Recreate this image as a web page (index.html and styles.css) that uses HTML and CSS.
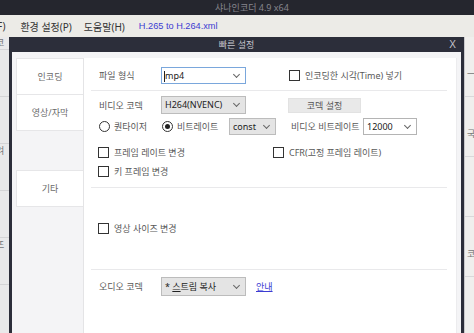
FILE: index.html
```html
<!DOCTYPE html>
<html lang="ko">
<head>
    <meta charset="UTF-8">
    <title>빠른 설정</title>
    <link rel="stylesheet" href="styles.css">
</head>
<body>
    <div class="app-title">샤나인코더 4.9 x64</div>
    <div class="menubar">
        <span class="menu cut">F)</span>
        <span class="menu">환경 설정(P)</span>
        <span class="menu">도움말(H)</span>
        <span class="menu preset">H.265 to H.264.xml</span>
    </div>

    <div class="desk">
        <!-- list behind the dialog, left side -->
        <div class="strip strip-left">
            <div class="strip-row">코</div>
            <div class="strip-row"></div>
            <div class="strip-row"></div>
            <div class="strip-row">려</div>
            <div class="strip-row"></div>
            <div class="strip-row">뜨</div>
        </div>

        <div class="dialog">
            <div class="dialog-title">
                <span></span>
                <span class="title-text">빠른 설정</span>
                <span class="close">X</span>
            </div>
            <div class="dialog-body">
                <div class="tabs">
                    <div class="tab">인코딩</div>
                    <div class="tab">영상/자막</div>
                    <div class="tab-gap"></div>
                    <div class="tab">기타</div>
                </div>

                <div class="panel">
                    <div class="section section-file">
                        <div class="row">
                            <span class="label">파일 형식</span>
                            <div class="combo combo-main focused"><span class="caret"></span>mp4<span class="arrow"></span></div>
                            <label class="check time-check"><span class="box"></span>인코딩한 시각(Time) 넣기</label>
                        </div>
                    </div>

                    <div class="section section-video">
                        <div class="row row-codec">
                            <span class="label">비디오 코덱</span>
                            <div class="combo combo-main grey">H264(NVENC)<span class="arrow"></span></div>
                            <button class="btn">코덱 설정</button>
                        </div>
                        <div class="row row-rate">
                            <label class="radio radio-q"><span class="dot"></span>퀀타이저</label>
                            <label class="radio radio-b"><span class="dot on"></span>비트레이트</label>
                            <div class="combo combo-mode grey">const<span class="arrow"></span></div>
                            <span class="label label-rate">비디오 비트레이트</span>
                            <div class="combo combo-rate">12000<span class="arrow"></span></div>
                        </div>
                        <div class="row row-fps">
                            <label class="check check-fps"><span class="box"></span>프레임 레이트 변경</label>
                            <label class="check"><span class="box"></span>CFR(고정 프레임 레이트)</label>
                        </div>
                        <div class="row row-key">
                            <label class="check"><span class="box"></span>키 프레임 변경</label>
                        </div>
                    </div>

                    <div class="section section-size">
                        <div class="row">
                            <label class="check"><span class="box"></span>영상 사이즈 변경</label>
                        </div>
                    </div>

                    <div class="section section-audio">
                        <div class="row">
                            <span class="label">오디오 코덱</span>
                            <div class="combo combo-audio grey">* <u>스</u>트림 복사<span class="arrow"></span></div>
                            <a class="help" href="#">안내</a>
                        </div>
                    </div>
                </div>
                <div class="panel-edge"></div>
            </div>
        </div>

        <!-- list behind the dialog, right side -->
        <div class="strip strip-right">
            <div class="strip-row">一</div>
            <div class="strip-row">국</div>
            <div class="strip-row"></div>
            <div class="strip-row">코</div>
        </div>
    </div>
</body>
</html>
```

FILE: styles.css
```css
html, body {
    margin: 0;
    padding: 0;
}
body {
    width: 474px;
    height: 333px;
    overflow: hidden;
    font-family: 'Noto Sans', 'Noto Sans CJK KR', sans-serif;
    font-size: 9px;
    color: #585858;
    background: #ecebe7;
}

/* main window title */
.app-title {
    height: 15px;
    line-height: 15px;
    background: #25262e;
    color: #85858d;
    font-size: 9px;
    text-align: center;
    padding-left: 30px;
}

/* menu bar */
.menubar {
    height: 22px;
    display: flex;
    align-items: center;
    background: #ecebe7;
    font-size: 10px;
    color: #333;
}
.menu {
    margin-right: 12px;
}
.menu.cut {
    margin-left: -3px;
    margin-right: 15px;
}
.menu.preset {
    color: #3c3cd2;
    font-family: 'Liberation Sans', sans-serif;
    font-size: 9.2px;
    margin-left: 2px;
}

.desk {
    display: flex;
    height: 296px;
}

/* pieces of the main window showing round the dialog */
.strip {
    background: #e9e9ea;
    color: #777;
    font-size: 9px;
    overflow: hidden;
}
.strip-left {
    width: 9px;
    display: flex;
    flex-direction: column;
}
.strip-left .strip-row {
    height: 46px;
    border-bottom: 1px solid #d4d4d6;
    text-indent: -4px;
}
.strip-left .strip-row:first-child {
    height: 12px;
    line-height: 12px;
}
.strip-right {
    width: 9px;
    background: #f0efed;
    border-left: 1px solid #c9c9cc;
    display: flex;
    flex-direction: column;
}
.strip-right .strip-row {
    height: 60px;
    padding-top: 30px;
    border-bottom: 1px solid #d8d8da;
    text-indent: 2px;
    box-sizing: border-box;
}

/* dialog */
.dialog {
    width: 455px;
    background: #2c2e3a;
    padding: 0 3px;
    box-sizing: border-box;
    display: flex;
    flex-direction: column;
}
.dialog-title {
    height: 15px;
    display: grid;
    grid-template-columns: 1fr auto 1fr;
    align-items: center;
    color: #c4c4cc;
    font-size: 9px;
}
.close {
    justify-self: end;
    margin-right: 5px;
    font-family: 'Liberation Sans', sans-serif;
    font-size: 10px;
}
.dialog-body {
    flex: 1;
    display: flex;
    background: #f4f4f6;
    padding-top: 6px;
}

/* left tabs */
.tabs {
    width: 67px;
    padding-left: 4px;
    display: flex;
    flex-direction: column;
}
.tab {
    height: 37px;
    background: #fff;
    border: 1px solid #e6e6e8;
    border-right: none;
    box-sizing: border-box;
    display: flex;
    align-items: center;
    justify-content: center;
    color: #6a6a6a;
    margin-top: -1px;
}
.tab:first-child {
    margin-top: 0;
}
.tab-gap {
    height: 40px;
}

/* right panel */
.panel {
    width: 373px;
    background: #fff;
    border-left: 1px solid #e4e4e6;
    box-sizing: border-box;
}
.panel-edge {
    flex: 1;
    border-left: 1px solid #ececee;
}
.section {
    margin: 0 9px 0 7px;
    padding-left: 8px;
    border-bottom: 1px solid #e9e9eb;
}
.section-file {
    padding-top: 9px;
    padding-bottom: 6px;
}
.section-video {
    padding-top: 5px;
    padding-bottom: 8px;
}
.section-size {
    padding-top: 32px;
    padding-bottom: 32px;
}
.section-audio {
    border-bottom: none;
    padding-top: 8px;
}

.row {
    display: flex;
    align-items: center;
    height: 17px;
}
.row-codec {
    height: 18px;
    margin-bottom: 4px;
}
.row-rate {
    margin-bottom: 9px;
}
.row-fps {
    height: 16px;
    margin-bottom: 3px;
}
.row-key {
    height: 16px;
}

.label {
    width: 62px;
    flex-shrink: 0;
}
.label-rate {
    width: 72px;
    margin-left: 15px;
}

/* dropdowns */
.combo {
    position: relative;
    height: 17px;
    line-height: 15px;
    border: 1px solid #b4b4b4;
    background: #fff;
    color: #222;
    box-sizing: border-box;
    padding-left: 3px;
    flex-shrink: 0;
}
.combo.grey {
    background: #e4e4e4;
    border-color: #bcbcbc;
}
.combo.focused {
    border-color: #7aa7dc;
}
.combo-main {
    width: 85px;
}
.row-codec .combo {
    height: 18px;
    line-height: 16px;
}
.combo-mode {
    width: 47px;
}
.combo-rate {
    width: 54px;
}
.combo-audio {
    width: 85px;
    height: 19px;
    line-height: 17px;
}
.combo-audio u {
    text-decoration-thickness: 1px;
}
.caret {
    display: inline-block;
    width: 1px;
    height: 11px;
    background: #222;
    vertical-align: middle;
    margin-left: -1px;
}
.arrow {
    position: absolute;
    right: 6px;
    top: 50%;
    width: 4px;
    height: 4px;
    margin-top: -4px;
    border-right: 1px solid #666;
    border-bottom: 1px solid #666;
    transform: rotate(45deg);
}

.btn {
    margin-left: 42px;
    width: 73px;
    height: 15px;
    padding: 0;
    border: 1px solid #e2e2e2;
    background: #e9e9e9;
    color: #555;
    font-family: inherit;
    font-size: 9px;
}

/* checkboxes and radios */
.check, .radio {
    display: flex;
    align-items: center;
    flex-shrink: 0;
}
.box {
    width: 11px;
    height: 11px;
    border: 1px solid #333;
    box-sizing: border-box;
    background: #fff;
    margin-right: 5px;
}
.section .check {
    margin-left: -1px;
}
.time-check {
    margin-left: 43px !important;
}
.check-fps {
    width: 176px;
}
.dot {
    width: 11px;
    height: 11px;
    border: 1px solid #333;
    border-radius: 50%;
    box-sizing: border-box;
    margin-right: 4px;
    display: flex;
    align-items: center;
    justify-content: center;
}
.dot.on::after {
    content: '';
    width: 5px;
    height: 5px;
    border-radius: 50%;
    background: #222;
}
.radio-q {
    width: 63px;
}
.radio-b {
    width: 67px;
}

.help {
    margin-left: 10px;
    color: #3c3cd2;
}
```
